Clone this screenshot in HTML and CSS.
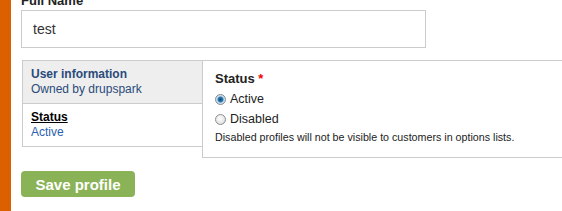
FILE: index.html
```
<!DOCTYPE html>
<html lang="en">
<head>
  <meta charset="UTF-8">
  <title>Edit profile</title>
  <link rel="stylesheet" href="styles.css">
</head>
<body>
  <div class="page">
    <div class="rail"></div>
    <main class="content">
      <div class="field">
        <label class="field-label" for="fullName">Full Name</label>
        <input type="text" id="fullName" class="text-input" value="test">
      </div>

      <!-- vertical tabs -->
      <div class="vtabs">
        <ul class="vtabs-list">
          <li class="vtab">
            <a href="#" class="vtab-title">User information</a>
            <span class="vtab-summary">Owned by drupspark</span>
          </li>
          <li class="vtab selected">
            <a href="#" class="vtab-title">Status</a>
            <span class="vtab-summary">Active</span>
          </li>
        </ul>
        <div class="vtabs-pane">
          <div class="pane-label">Status <span class="required">*</span></div>
          <label class="radio-row"><input type="radio" name="status" class="radio" checked> Active</label>
          <label class="radio-row"><input type="radio" name="status" class="radio"> Disabled</label>
          <p class="description">Disabled profiles will not be visible to customers in options lists.</p>
        </div>
      </div>

      <button class="save-btn">Save profile</button>
    </main>
  </div>
</body>
</html>
```

FILE: styles.css
```
body {
  margin: 0;
  padding: 0;
  background-color: #fff;
  font-family: 'Liberation Sans', Arial, sans-serif;
  color: #333;
  overflow: hidden;
}

.page {
  display: flex;
  min-height: 211px;
}

.rail {
  width: 11px;
  flex: none;
  background-color: #dd6000;
}

.content {
  padding-left: 10px;
  width: 620px;
  flex: none;
}

/* full name */
.field {
  display: flex;
  flex-direction: column;
  margin-top: -7px;
}

.field-label {
  font-size: 13px;
  font-weight: bold;
  color: #222;
  line-height: 16px;
  margin-bottom: 1px;
}

.text-input {
  width: 405px;
  height: 38px;
  box-sizing: border-box;
  border: 1px solid #ccc;
  padding: 0 11px;
  font-family: 'Liberation Sans', Arial, sans-serif;
  font-size: 14px;
  color: #333;
  outline: none;
}

/* vertical tabs */
.vtabs {
  display: flex;
  margin-top: 12px;
}

.vtabs-list {
  list-style: none;
  margin: 0 0 11px 1px;
  padding: 0;
  width: 179px;
  border: 1px solid #ccc;
  border-right: none;
  align-self: flex-start;
}

.vtab {
  display: flex;
  flex-direction: column;
  padding: 6px 8px;
  height: 30px;
  font-size: 12px;
  line-height: 15px;
  background-color: #eee;
  border-bottom: 1px solid #ccc;
}

.vtab:last-child {
  border-bottom: none;
}

.vtab-title {
  font-weight: bold;
  color: #2a4a7b;
  text-decoration: none;
}

.vtab-summary {
  color: #2a4a7b;
}

.vtab.selected {
  background-color: #fff;
}

.vtab.selected .vtab-title {
  color: #000;
  text-decoration: underline;
}

.vtab.selected .vtab-summary {
  color: #2b5fae;
}

.vtabs-pane {
  flex: 1;
  border: 1px solid #ccc;
  padding: 10px 12px 10px 12px;
}

.pane-label {
  font-size: 13px;
  font-weight: bold;
  color: #222;
  line-height: 16px;
  margin-bottom: 3px;
}

.required {
  color: #e00;
}

.radio-row {
  display: flex;
  align-items: center;
  height: 18px;
  margin-bottom: 2px;
  font-size: 12.5px;
  color: #222;
}

.radio {
  appearance: none;
  -webkit-appearance: none;
  width: 11px;
  height: 11px;
  margin: 0 4px 0 0;
  border: 1px solid #8e8f8f;
  border-radius: 50%;
  background: radial-gradient(circle at 45% 40%, #fff 0, #e6e6e6 60%, #c9c9c9 100%);
}

.radio:checked {
  border-color: #7f8a93;
  background: radial-gradient(circle at 50% 50%, #123f66 0, #2a80c0 2.5px, #c7dbe8 3.5px, #e8eef2 100%);
}

.description {
  margin: 1px 0 0 0;
  font-size: 10.7px;
  line-height: 14px;
  color: #222;
}

/* save */
.save-btn {
  margin-top: 13px;
  width: 114px;
  height: 26px;
  background-color: #8ab358;
  color: #fff;
  border: none;
  border-radius: 4px;
  font-family: 'Liberation Sans', Arial, sans-serif;
  font-size: 15px;
  font-weight: bold;
  padding: 0;
  cursor: pointer;
}
```
